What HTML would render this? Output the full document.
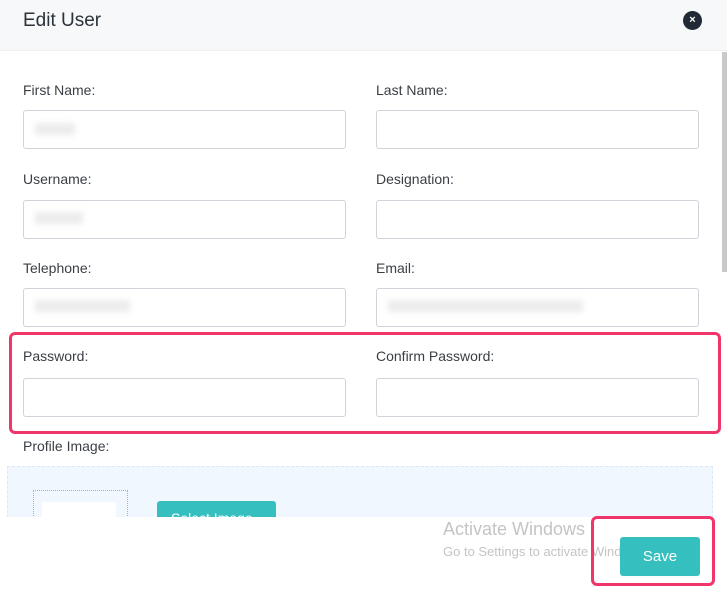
<!DOCTYPE html>
<html><head><style>
body{margin:0;width:727px;height:591px;overflow:hidden;background:#fff;font-family:"Liberation Sans",sans-serif;position:relative;color:#333}
.a{position:absolute}
.lbl{font-size:14px;color:#3a3f45}
.in{position:absolute;border:1px solid #ced4da;border-radius:3px;background:#fff;width:321px;height:37px}
.blur{position:absolute;background:#ececec;filter:blur(3px);height:12px}
</style></head><body>
<div class="a" style="left:0;top:0;width:727px;height:50px;background:#f7f8fa;border-bottom:1px solid #eceef0"></div>
<div class="a" style="left:23px;top:10px;font-size:19px;color:#2b323a">Edit User</div>
<div class="a" style="left:683px;top:11px;width:19px;height:19px;border-radius:50%;background:#1f2a36;color:#fff;font-size:11px;font-weight:bold;text-align:center;line-height:19px">×</div>
<div class="a" style="left:722px;top:52px;width:5px;height:220px;background:#c9c9c9"></div>

<div class="a lbl" style="left:23px;top:82px">First Name:</div>
<div class="a lbl" style="left:376px;top:82px">Last Name:</div>
<div class="in" style="left:23px;top:110px"></div><div class="blur" style="left:35px;top:123px;width:40px"></div>
<div class="in" style="left:376px;top:110px"></div>

<div class="a lbl" style="left:23px;top:171px">Username:</div>
<div class="a lbl" style="left:376px;top:171px">Designation:</div>
<div class="in" style="left:23px;top:200px"></div><div class="blur" style="left:35px;top:212px;width:48px"></div>
<div class="in" style="left:376px;top:200px"></div>

<div class="a lbl" style="left:23px;top:260px">Telephone:</div>
<div class="a lbl" style="left:376px;top:260px">Email:</div>
<div class="in" style="left:23px;top:288px"></div><div class="blur" style="left:35px;top:300px;width:95px"></div>
<div class="in" style="left:376px;top:288px"></div><div class="blur" style="left:388px;top:300px;width:195px"></div>

<div class="a lbl" style="left:23px;top:348px">Password:</div>
<div class="a lbl" style="left:376px;top:348px">Confirm Password:</div>
<div class="in" style="left:23px;top:378px"></div>
<div class="in" style="left:376px;top:378px"></div>
<div class="a" style="left:9px;top:332px;width:706px;height:96px;border:3px solid #f0356b;border-radius:6px"></div>

<div class="a lbl" style="left:23px;top:438px">Profile Image:</div>
<div class="a" style="left:7px;top:466px;width:704px;height:60px;background:#f1f7fe;border:1px dashed #dce8f3"></div>
<div class="a" style="left:33px;top:490px;width:93px;height:40px;border:1px dotted #6cc;background:#f1f7fe"></div>
<div class="a" style="left:42px;top:502px;width:74px;height:20px;background:#fff"></div>
<div class="a" style="left:157px;top:501px;width:119px;height:20px;background:#36bfbf;border-radius:3px;color:#fff;font-size:14px;padding:9px 0 0 14px;box-sizing:border-box">Select Image</div>
<div class="a" style="left:0;top:517px;width:727px;height:74px;background:#fff"></div>
<div class="a" style="left:443px;top:519px;font-size:18px;color:#c4c4c4">Activate Windows</div>
<div class="a" style="left:443px;top:544px;font-size:13px;color:#c4c4c4">Go to Settings to activate Windows.</div>
<div class="a" style="left:620px;top:537px;width:80px;height:39px;background:#36bfbf;border-radius:3px;color:#fff;font-size:15px;text-align:center;line-height:39px">Save</div>
<div class="a" style="left:591px;top:516px;width:118px;height:64px;border:3px solid #f0356b;border-radius:6px"></div>
</body></html>
